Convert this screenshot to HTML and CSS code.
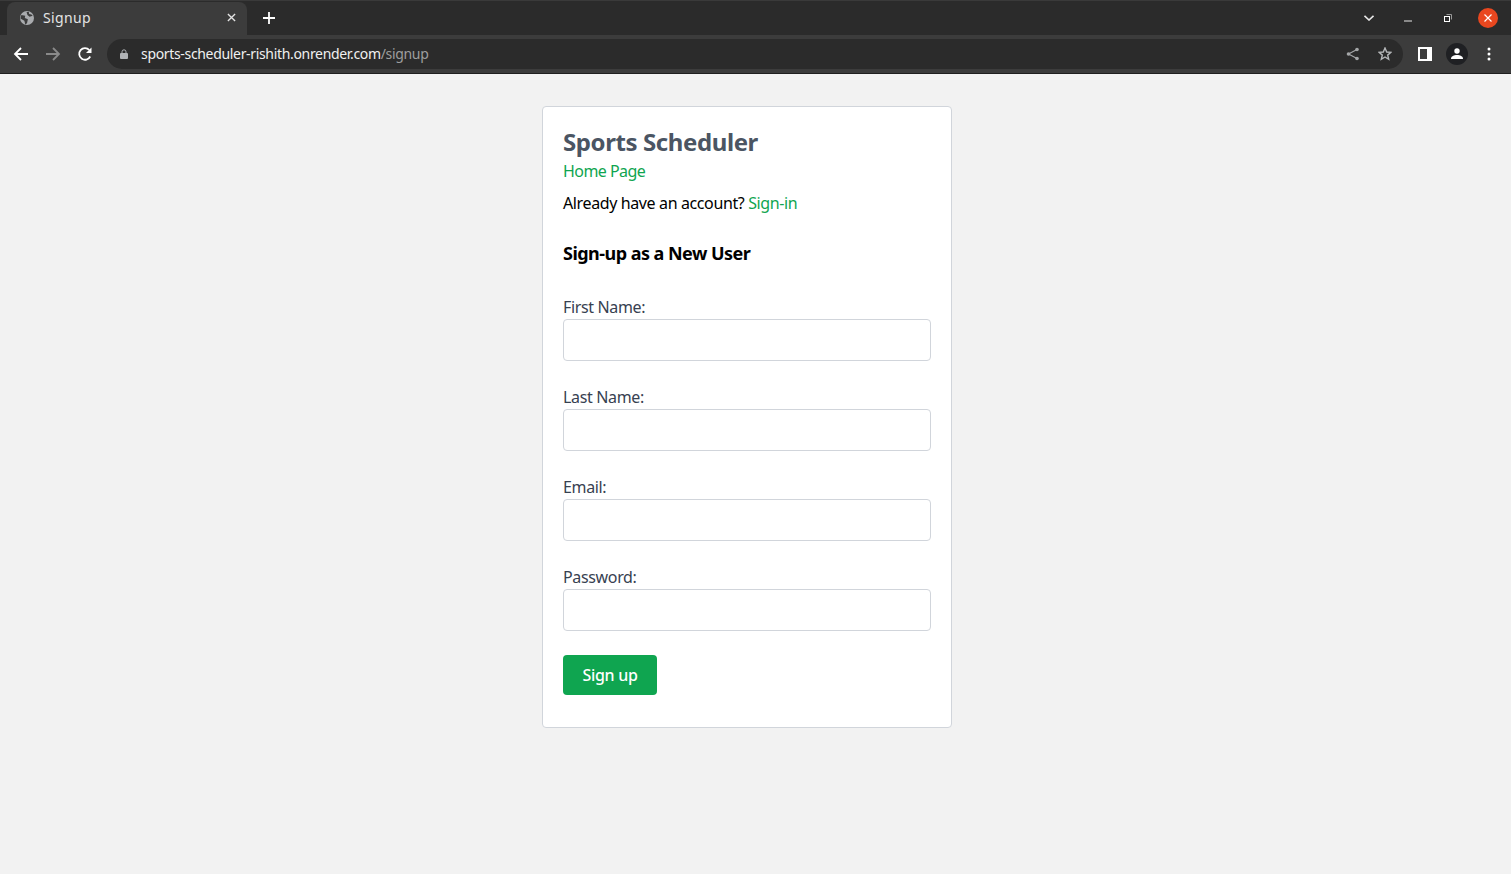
FILE: index.html
```html
<!DOCTYPE html>
<html lang="en">
<head>
<meta charset="utf-8">
<title>Signup</title>
<link rel="stylesheet" href="styles.css">
</head>
<body>
<header class="chrome">
  <div class="tabstrip">
    <div class="tab">
      <svg class="favicon" viewBox="0 0 16 16"><circle cx="8" cy="8" r="8" fill="#a9abae"/><path d="M1.500 4.500 6 5.500 5.500 8 9 9.500 8 14l-2 1.500L5 11 .5 8.500zM10 .8l.5 2.700 2.500.5 1.500 1.500-3.500 1.200-2.500-2-1-3.500z" fill="#3c3c3c"/></svg>
      <span class="tab-title">Signup</span>
      <svg class="tab-close" viewBox="0 0 10 10"><path d="M1 1l8 8M9 1l-8 8" stroke="#e4e4e4" stroke-width="1.500"/></svg>
    </div>
    <svg class="new-tab" viewBox="0 0 12 12"><path d="M6 0v12M0 6h12" stroke="#fff" stroke-width="1.800"/></svg>
    <div class="window-controls">
      <svg class="chevron" viewBox="0 0 10 6"><path d="M.5.800 5 5 9.500.800" fill="none" stroke="#e8e8e8" stroke-width="1.600"/></svg>
      <svg class="minimize" viewBox="0 0 8 2"><path d="M0 1h8" stroke="#e8e8e8" stroke-width="1"/></svg>
      <svg class="restore" viewBox="0 0 8 8"><path d="M2.500.500h5v5" fill="none" stroke="#999" stroke-width="1"/><rect x=".500" y="2.500" width="5" height="5" fill="none" stroke="#fff" stroke-width="1"/></svg>
      <span class="close-btn"><svg viewBox="0 0 8 8"><path d="M.5.500l7 7M7.500.500l-7 7" stroke="#fff" stroke-width="1.200"/></svg></span>
    </div>
  </div>
  <div class="toolbar">
    <svg class="nav-icon" viewBox="0 0 16 16"><path d="M15 8H2M8 2 2 8l6 6" fill="none" stroke="#fff" stroke-width="1.800"/></svg>
    <svg class="nav-icon" viewBox="0 0 16 16"><path d="M1 8h13M8 2l6 6-6 6" fill="none" stroke="#8a8a8a" stroke-width="1.800"/></svg>
    <svg class="nav-icon" viewBox="0 0 16 16"><path d="M13.200 10.500A5.800 5.800 0 1 1 12.300 4" fill="none" stroke="#fff" stroke-width="1.800"/><path d="M14.500 1.500v5.500H9z" fill="#fff"/></svg>
    <div class="omnibox">
      <svg class="lock" viewBox="0 0 8 10"><path d="M2 4V2.800a2 2 0 0 1 4 0V4" fill="none" stroke="#b0b2b5" stroke-width="1"/><rect y="4" width="8" height="6" rx="1" fill="#b0b2b5"/></svg>
      <span class="url"><span class="host">sports-scheduler-rishith.onrender.com</span><span class="path">/signup</span></span>
      <svg class="omni-icon" viewBox="0 0 14 14"><circle cx="11" cy="2.500" r="1.800" fill="#a5a7a9"/><circle cx="11" cy="11.500" r="1.800" fill="#a5a7a9"/><circle cx="2.500" cy="7" r="1.800" fill="#a5a7a9"/><path d="M11 2.500 2.500 7l8.500 4.500" fill="none" stroke="#a5a7a9" stroke-width="1.200"/></svg>
      <svg class="omni-icon star" viewBox="0 0 14 14"><path d="M7 1l1.700 4 4.300.3-3.300 2.800 1 4.200L7 10l-3.700 2.300 1-4.200L1 5.300 5.300 5z" fill="none" stroke="#b5b7b9" stroke-width="1.400"/></svg>
    </div>
    <svg class="side-panel" viewBox="0 0 14 14"><path fill-rule="evenodd" d="M0 0h14v14H0zM2 2v10h7V2z" fill="#fff"/></svg>
    <span class="avatar"><svg viewBox="0 0 12 12"><circle cx="6" cy="3" r="2.700" fill="#fff"/><path d="M0 11c0-3 3-4 6-4s6 1 6 4z" fill="#fff"/></svg></span>
    <svg class="kebab" viewBox="0 0 4 14"><circle cx="2" cy="2" r="1.500" fill="#fff"/><circle cx="2" cy="7" r="1.500" fill="#fff"/><circle cx="2" cy="12" r="1.500" fill="#fff"/></svg>
  </div>
</header>
<main class="page">
  <section class="card">
    <h1 class="brand">Sports Scheduler</h1>
    <a class="link home" href="#">Home Page</a>
    <p class="account">Already have an account? <a class="link" href="#">Sign-in</a></p>
    <h2 class="subtitle">Sign-up as a New User</h2>
    <form class="form">
      <div class="field"><label class="label" for="f">First Name:</label><input class="input" id="f" type="text"></div>
      <div class="field"><label class="label" for="l">Last Name:</label><input class="input" id="l" type="text"></div>
      <div class="field"><label class="label" for="e">Email:</label><input class="input" id="e" type="email"></div>
      <div class="field"><label class="label" for="p">Password:</label><input class="input" id="p" type="password"></div>
      <button class="submit" type="button">Sign up</button>
    </form>
  </section>
</main>
</body>
</html>
```
FILE: styles.css
```css
* { box-sizing: border-box; }
html, body { margin: 0; height: 100%; overflow: hidden; }
body {
  background: #f2f2f2;
  font-family: "Noto Sans", "Open Sans", sans-serif;
  display: flex;
  flex-direction: column;
}
.chrome { background: #2b2b2b; flex: none; height: 74px; border-bottom: 1px solid #1f1f1f; }
.tabstrip { height: 35px; display: flex; align-items: center; padding: 2px 0 0 7px; border-top: 1px solid #3a3a3a; }
.tab {
  width: 240px; height: 33px; background: #3c3c3c; border-radius: 8px 8px 0 0;
  display: flex; align-items: center; padding: 0 11px 2px 13px; color: #e4e4e4; align-self: flex-end;
}
.favicon { width: 14px; height: 14px; flex: none; }
.tab-title { margin-left: 9px; flex: 1; font-size: 14px; letter-spacing: .35px; }
.tab-close { width: 9px; height: 9px; }
.new-tab { width: 12px; height: 12px; margin-left: 16px; margin-bottom: 2px; }
.window-controls { margin-left: auto; display: flex; align-items: center; height: 100%; padding-bottom: 2px; }
.chevron { width: 10px; height: 6px; margin-right: 30px; }
.minimize { width: 8px; height: 2px; margin-right: 32px; margin-top: 6px; }
.restore { width: 8px; height: 8px; margin-right: 26px; }
.close-btn {
  width: 20px; height: 20px; border-radius: 50%; background: #e9471f; display: flex;
  align-items: center; justify-content: center; margin-right: 13px;
}
.close-btn svg { width: 8px; height: 8px; }
.toolbar { height: 38px; background: #3c3c3c; display: flex; align-items: center; padding-left: 13px; }
.nav-icon { width: 16px; height: 16px; margin-right: 16px; flex: none; }
.nav-icon:nth-child(3) { margin-right: 14px; }
.omnibox {
  width: 1296px; height: 30px; background: #2b2b2b; border-radius: 15px; display: flex; align-items: center;
  padding-left: 13px; flex: none;
}
.lock { width: 8px; height: 10px; flex: none; }
.url { margin-left: 13px; font-size: 14px; flex: 1; letter-spacing: -.33px; line-height: 18px; padding-bottom: 1px; }
.host { color: #f0f0f0; }
.path { color: #9e9e9e; }
.omni-icon { width: 14px; height: 14px; margin-right: 18px; }
.star { margin-right: 11px; }
.side-panel { width: 14px; height: 14px; margin-left: 15px; }
.avatar {
  width: 22px; height: 22px; background: #1f2023; border-radius: 50%; margin-left: 14px;
  display: flex; align-items: center; justify-content: center;
}
.avatar svg { width: 12px; height: 12px; }
.kebab { width: 4px; height: 14px; margin-left: 19px; }
.page { flex: 1; padding-top: 32px; padding-left: 542px; }
.card {
  width: 410px; height: 622px; background: #fff; border: 1px solid #d1d5db; border-radius: 4px; padding: 19px 20px 20px;
}
.brand { margin: 0; font-size: 24px; line-height: 32px; font-weight: 700; color: #4b5563; letter-spacing: -.4px; }
.link { color: #0fa550; text-decoration: none; }
.home { display: block; font-size: 16px; line-height: 24px; margin-top: 1px; letter-spacing: -.55px; }
.account { margin: 8px 0 0; font-size: 16px; line-height: 24px; color: #000; letter-spacing: -.38px; }
.subtitle { margin: 24px 0 0; font-size: 18px; line-height: 28px; font-weight: 700; color: #000; letter-spacing: -.53px; }
.form { margin-top: 28px; }
.field { margin-bottom: 24px; display: flex; flex-direction: column; }
.label { font-size: 16px; line-height: 24px; height: 24px; color: #374151; letter-spacing: -.35px; }
.input { height: 42px; width: 100%; border: 1px solid #d1d5db; border-radius: 4px; background: #fff; }
.submit {
  display: block; width: 94px; height: 40px; background: #0fa550; color: #fff; border: 0; border-radius: 4px;
  font: 500 16px/24px "Noto Sans", sans-serif; letter-spacing: -.3px;
}
```
